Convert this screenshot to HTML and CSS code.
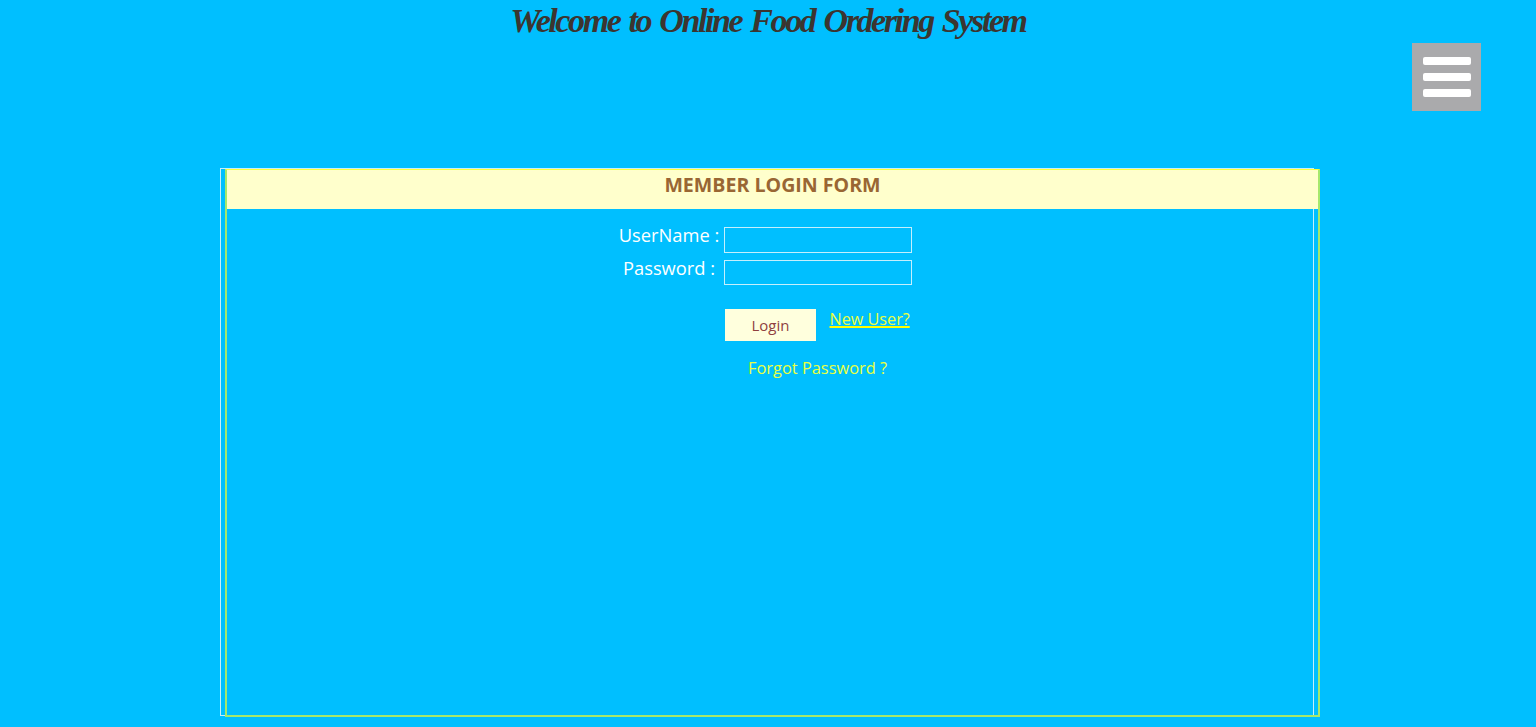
FILE: index.html
```html
<!DOCTYPE html>
<html lang="en">
<head>
  <meta charset="UTF-8">
  <title>Member Login - Online Food Ordering System</title>
  <link rel="stylesheet" href="styles.css">
</head>
<body>
  <h1 class="site-title">Welcome to Online Food Ordering System</h1>
  <div class="menu-btn">
    <span></span>
    <span></span>
    <span></span>
  </div>

  <div class="outer-box">
    <div class="inner-box">
      <div class="form-heading">MEMBER LOGIN FORM</div>
      <form class="login-form">
        <div class="form-row">
          <label class="form-label">UserName :</label>
          <input type="text" class="form-input">
        </div>
        <div class="form-row">
          <label class="form-label">Password :</label>
          <input type="password" class="form-input">
        </div>
        <div class="action-row">
          <button type="button" class="login-btn">Login</button>
          <a href="#" class="new-user">New User?</a>
        </div>
        <div class="forgot-row">
          <a href="#" class="forgot-link">Forgot Password ?</a>
        </div>
      </form>
    </div>
  </div>
</body>
</html>
```

FILE: styles.css
```css
body {
  margin: 0;
  height: 727px;
  overflow: hidden;
  background: #00bfff;
  font-family: "Open Sans", sans-serif;
}
.site-title {
  margin: 0;
  height: 168px;
  text-align: center;
  font-family: "Liberation Serif", serif;
  font-style: italic;
  font-weight: bold;
  font-size: 34px;
  line-height: 42px;
  letter-spacing: -2.4px;
  word-spacing: 3px;
  color: #3c3530;
}
.menu-btn {
  position: absolute;
  top: 43px;
  left: 1412px;
  width: 69px;
  height: 68px;
  padding-top: 14px;
  box-sizing: border-box;
  background: #aaaaac;
}
.menu-btn span {
  display: block;
  width: 48px;
  height: 8px;
  margin: 0 auto 8px;
  background: white;
  border-radius: 2px;
}
.outer-box {
  box-sizing: border-box;
  width: 1094px;
  height: 548px;
  margin-left: 220px;
  border: 1px solid #c5effd;
}
.inner-box {
  box-sizing: border-box;
  width: 1095px;
  height: 548px;
  margin-left: 4px;
  border: 2px solid #a6e86c;
  border-top: 1px solid #ffff33;
}
.form-heading {
  height: 39px;
  background: #ffffcc;
  color: #996633;
  font-size: 19.6px;
  font-weight: bold;
  line-height: 30px;
  text-align: center;
}
.login-form {
  margin-left: 387px;
  padding-top: 18px;
}
.form-row {
  display: flex;
  height: 26px;
  margin-bottom: 7px;
}
.form-row + .form-row {
  margin-bottom: 0;
}
.form-row + .form-row .form-input {
  height: 25px;
}
.form-label {
  width: 110px;
  text-align: center;
  color: white;
  font-size: 18.3px;
  line-height: 15px;
}
.form-input {
  box-sizing: border-box;
  width: 188px;
  height: 26px;
  padding: 0;
  background: transparent;
  border: 1px solid #c5effd;
}
.action-row {
  display: flex;
  align-items: flex-start;
  margin: 23px 0 0 111px;
}
.login-btn {
  width: 91px;
  height: 32px;
  padding: 0;
  border: none;
  background: #ffffdd;
  color: #8f3f3f;
  font-family: "Open Sans", sans-serif;
  font-size: 15px;
}
.new-user {
  margin-left: 13.5px;
  color: #eaff40;
  font-size: 16.2px;
  line-height: 20px;
  text-decoration-color: #ffff00;
  text-decoration-thickness: 2px;
}
.forgot-row {
  margin: 16px 0 0 134px;
}
.forgot-link {
  color: #eaff40;
  font-size: 16.4px;
  line-height: 22px;
  text-decoration: none;
}
```
